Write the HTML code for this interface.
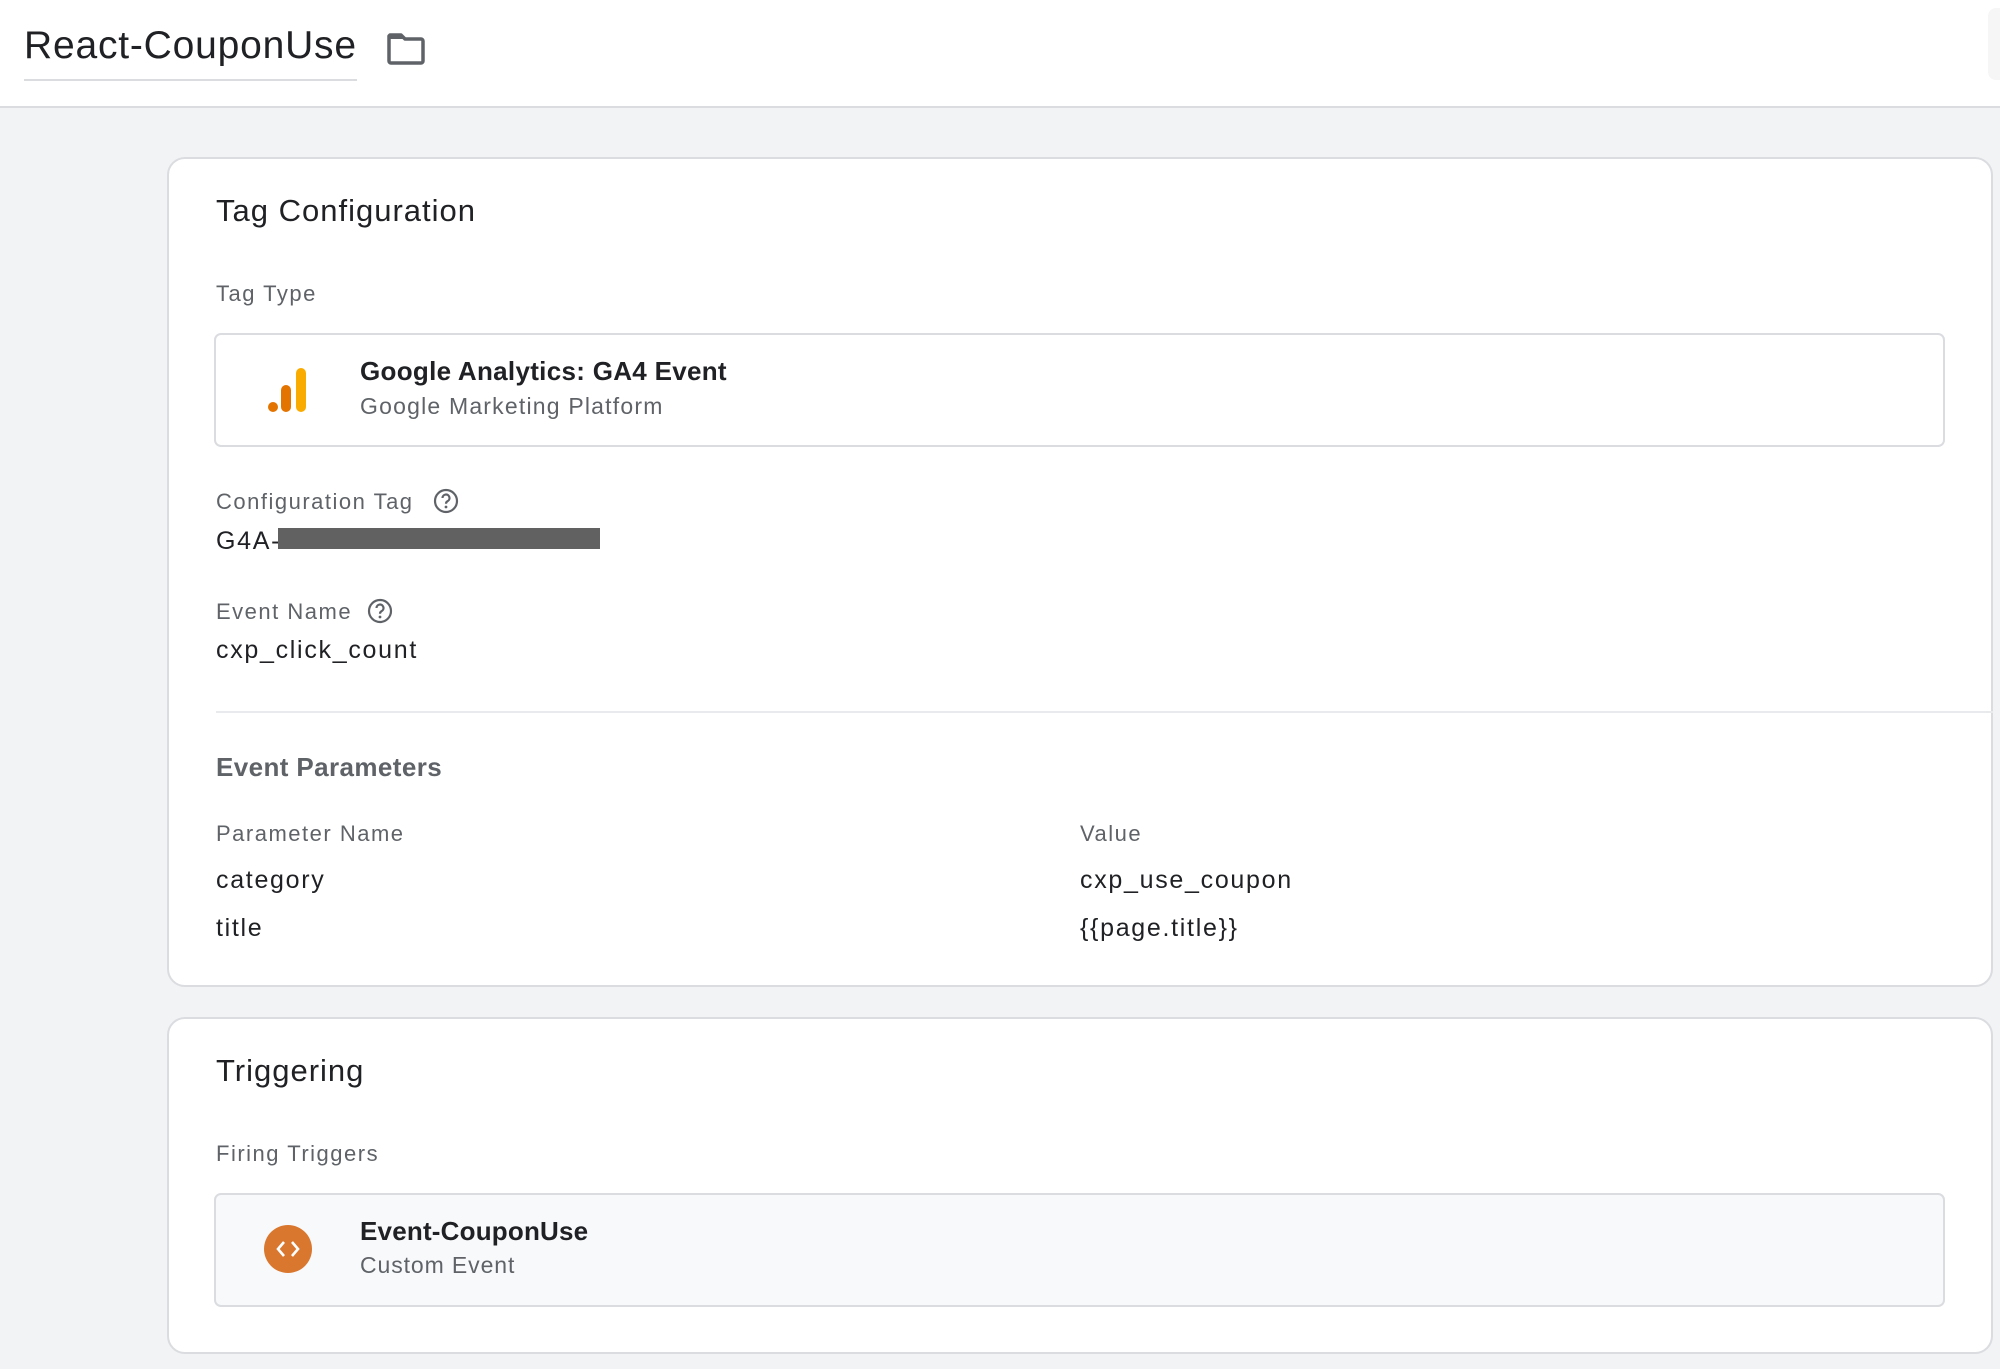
<!DOCTYPE html>
<html><head><meta charset="utf-8"><style>
*{margin:0;padding:0;box-sizing:border-box}
body{width:2000px;height:1369px;background:#f1f3f4;font-family:"Liberation Sans",Roboto,sans-serif;position:relative;overflow:hidden;color:#202124}
.a{position:absolute;white-space:nowrap;line-height:40px;height:40px}
.hdr{position:absolute;left:0;top:0;width:2000px;height:108px;background:#fff;border-bottom:2px solid #dadce0}
.card{position:absolute;left:167px;width:1826px;background:#fff;border:2px solid #dadce0;border-radius:18px}
.box{position:absolute;left:214px;width:1731px;border:2px solid #dadce0;border-radius:7px}
.lbl{font-size:22px;color:#5f6368;letter-spacing:1.5px}
.val{font-size:25px;color:#202124;letter-spacing:1.7px}
.help{position:absolute;width:26px;height:26px}
</style></head><body>
<div class="hdr"></div>
<div class="a" style="left:24px;top:26px;font-size:39px;color:#202124;line-height:40px;letter-spacing:0.8px">React-CouponUse</div>
<div style="position:absolute;left:24px;top:79px;width:333px;height:2px;background:#dadce0"></div>
<svg style="position:absolute;left:385px;top:30px" width="42" height="36" viewBox="0 0 42 36"><path d="M5 5h11l4 4h16a2 2 0 0 1 2 2v20a2 2 0 0 1-2 2H6a2 2 0 0 1-2-2V6z" fill="none" stroke="#5f6368" stroke-width="3.5" stroke-linejoin="round"/><path d="M5 5h11l4 4H5z" fill="#5f6368"/></svg>
<div style="position:absolute;left:1988px;top:8px;width:20px;height:72px;background:#f6f6f6;border-radius:8px"></div>

<div class="card" style="top:157px;height:830px"></div>
<div class="a" style="left:216px;top:191px;font-size:31px;letter-spacing:1px">Tag Configuration</div>
<div class="a lbl" style="left:216px;top:274px">Tag Type</div>
<div class="box" style="top:333px;height:114px;background:#fff"></div>
<svg style="position:absolute;left:266px;top:365px" width="44" height="50"><circle cx="7" cy="42" r="5" fill="#e37400"/><rect x="15" y="20" width="10" height="27" rx="5" fill="#e37400"/><rect x="30" y="3" width="10" height="44" rx="5" fill="#f9ab00"/></svg>
<div class="a" style="left:360px;top:351px;font-size:26px;font-weight:bold;color:#202124;letter-spacing:0.3px">Google Analytics: GA4 Event</div>
<div class="a" style="left:360px;top:386px;font-size:23px;color:#5f6368;letter-spacing:1.2px">Google Marketing Platform</div>

<div class="a lbl" style="left:216px;top:482px">Configuration Tag</div>
<svg class="help" style="left:433px;top:488px" viewBox="0 0 26 26"><circle cx="13" cy="13" r="11" fill="none" stroke="#5f6368" stroke-width="2.2"/><path d="M9.5 10a3.5 3.5 0 1 1 5 3.2c-1.2.6-1.5 1.2-1.5 2.5" fill="none" stroke="#5f6368" stroke-width="2.2"/><circle cx="13" cy="19" r="1.4" fill="#5f6368"/></svg>
<div class="a val" style="left:216px;top:521px">G4A-</div>
<div style="position:absolute;left:278px;top:528px;width:322px;height:21px;background:#616161"></div>

<div class="a lbl" style="left:216px;top:592px">Event Name</div>
<svg class="help" style="left:367px;top:598px" viewBox="0 0 26 26"><circle cx="13" cy="13" r="11" fill="none" stroke="#5f6368" stroke-width="2.2"/><path d="M9.5 10a3.5 3.5 0 1 1 5 3.2c-1.2.6-1.5 1.2-1.5 2.5" fill="none" stroke="#5f6368" stroke-width="2.2"/><circle cx="13" cy="19" r="1.4" fill="#5f6368"/></svg>
<div class="a val" style="left:216px;top:630px">cxp_click_count</div>

<div style="position:absolute;left:216px;top:711px;width:1777px;height:2px;background:#e8eaed"></div>
<div class="a" style="left:216px;top:747px;font-size:26px;font-weight:bold;color:#5f6368;letter-spacing:0.4px">Event Parameters</div>
<div class="a lbl" style="left:216px;top:814px">Parameter Name</div>
<div class="a lbl" style="left:1080px;top:814px">Value</div>
<div class="a val" style="left:216px;top:860px">category</div>
<div class="a val" style="left:1080px;top:860px">cxp_use_coupon</div>
<div class="a val" style="left:216px;top:908px">title</div>
<div class="a val" style="left:1080px;top:908px">{{page.title}}</div>

<div class="card" style="top:1017px;height:337px"></div>
<div class="a" style="left:216px;top:1051px;font-size:31px;letter-spacing:1px">Triggering</div>
<div class="a lbl" style="left:216px;top:1134px">Firing Triggers</div>
<div class="box" style="top:1193px;height:114px;background:#f8f9fa"></div>
<svg style="position:absolute;left:264px;top:1225px" width="48" height="48"><circle cx="24" cy="24" r="24" fill="#d9772f"/><path d="M20 17l-6 7 6 7M28 17l6 7-6 7" fill="none" stroke="#fff" stroke-width="2.6"/></svg>
<div class="a" style="left:360px;top:1211px;font-size:26px;font-weight:bold;letter-spacing:0.2px">Event-CouponUse</div>
<div class="a" style="left:360px;top:1245px;font-size:23px;color:#5f6368;letter-spacing:0.9px">Custom Event</div>
</body></html>
